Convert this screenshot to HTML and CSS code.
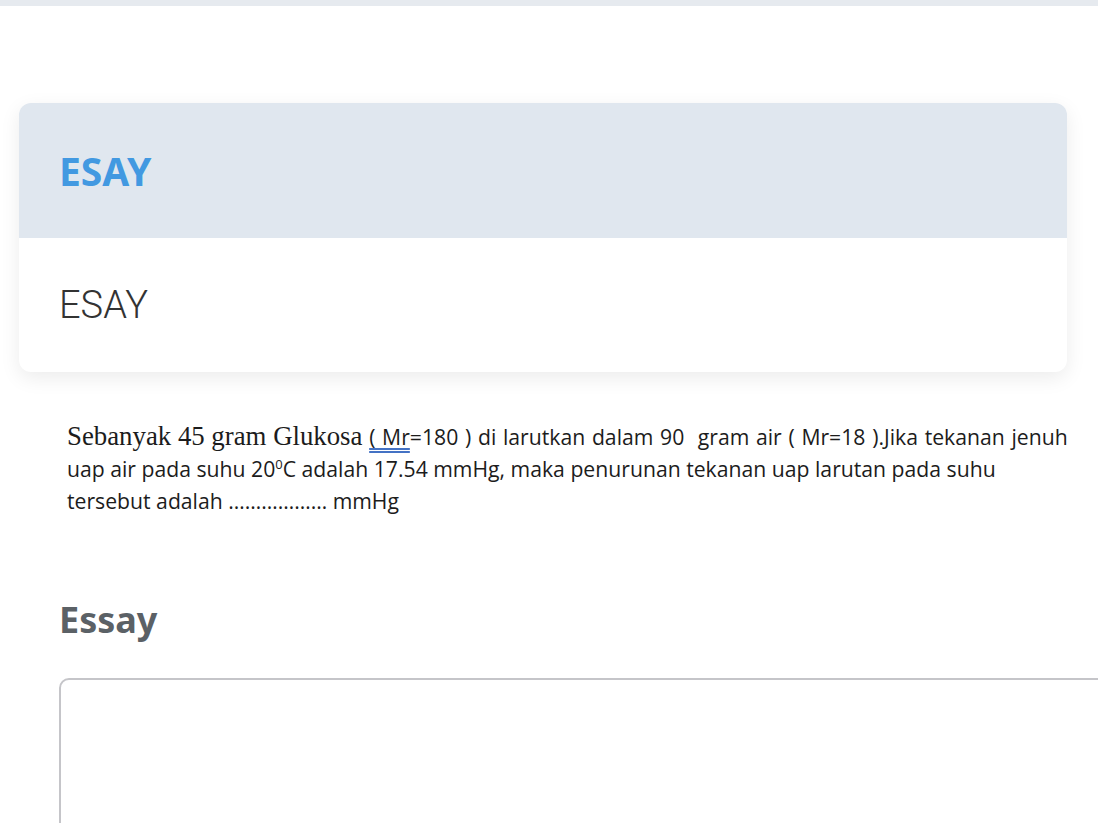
FILE: index.html
```html
<!DOCTYPE html>
<html lang="id">

<head>
    <meta charset="UTF-8">
    <meta name="viewport" content="width=device-width, initial-scale=1.0">
    <title>Esay</title>
    <link rel="stylesheet" href="styles.css">
</head>

<body>

    <div class="topbar"></div>

    <main class="page">
        <section class="card">
            <header class="card-head">
                <h2>ESAY</h2>
            </header>
            <div class="card-body">
                <p>ESAY</p>
            </div>
        </section>

        <div class="question">
            <p><span class="first-line"><span class="serif">Sebanyak 45 gram Glukosa</span> <span class="mark">( Mr</span>=180 ) di larutkan dalam 90&nbsp; gram air ( Mr=18 ).Jika tekanan jenuh</span><br>
                uap air pada suhu 20<sup>0</sup>C adalah 17.54 mmHg, maka penurunan tekanan uap larutan pada suhu<br>
                tersebut adalah &hellip;&hellip;&hellip;&hellip;&hellip;&hellip; mmHg</p>
        </div>

        <h3 class="answer-title">Essay</h3>
        <textarea class="answer"></textarea>
    </main>

</body>

</html>
```

FILE: styles.css
```css
html,
body {
    margin: 0;
    overflow: hidden;
}

body {
    font-family: "Noto Sans", Arial, sans-serif;
    background-color: #fff;
}

.topbar {
    height: 6px;
    background-color: #e6eaef;
}

.page {
    padding: 97px 0 0 19px;
}

.card {
    width: 1048px;
    background: #fff;
    border-radius: 12px;
    box-shadow: 0px 6px 20px rgba(0, 0, 0, 0.08);
    overflow: hidden;
}

.card-head {
    height: 135px;
    background-color: #e0e7ef;
    display: flex;
    align-items: center;
    padding-left: 40px;
}

.card-head h2 {
    margin: 0;
    font-size: 39px;
    font-weight: 700;
    color: #4299e1;
}

.card-body {
    height: 134px;
    display: flex;
    align-items: center;
    padding-left: 40px;
}

.card-body p {
    margin: 0;
    font-family: Roboto, Arial, sans-serif;
    font-weight: 300;
    font-size: 38px;
    color: #333;
}

/* question text, originally pasted from a document */
.question {
    margin: 36px 0 0 39px;
    padding: 12px 0 10px 9px;
    width: 1014px;
}

.question p {
    margin: 0;
    font-family: "Open Sans", "Liberation Sans", sans-serif;
    font-size: 21.2px;
    line-height: 32px;
    color: #1c1c1c;
    white-space: nowrap;
}

.question .first-line {
    word-spacing: 1.2px;
}

.question .serif {
    font-family: "Liberation Serif", serif;
    font-size: 26.8px;
    word-spacing: 0;
}

.question .mark {
    text-decoration: underline double #4472c4;
    text-underline-offset: 3px;
}

.question sup {
    font-size: 13px;
    line-height: 0;
}

.answer-title {
    margin: 71px 0 0 40px;
    font-size: 36px;
    line-height: 44px;
    font-weight: 700;
    color: #5b6166;
}

.answer {
    display: block;
    margin: 36px 0 0 40px;
    width: 1100px;
    height: 220px;
    border: 2px solid #c5c5c9;
    border-radius: 10px;
    resize: none;
}
```
